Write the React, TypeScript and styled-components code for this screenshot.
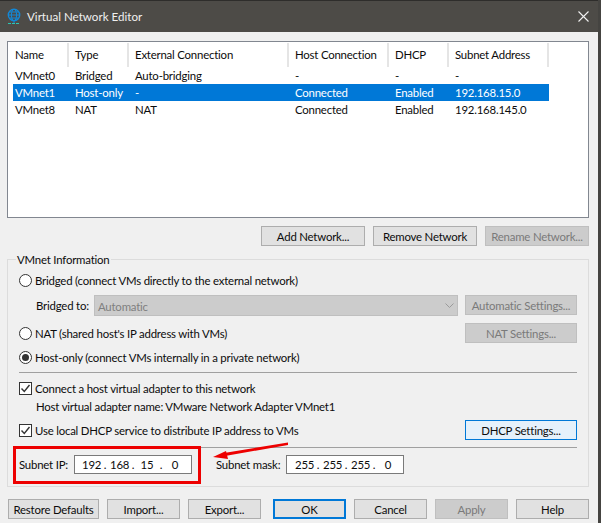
import { Fragment } from "react";
import styled, { createGlobalStyle } from "styled-components";

const Global = createGlobalStyle`
  html, body { margin: 0; padding: 0; background: #f0f0f0; }
  body { font-family: Lato, "Liberation Sans", sans-serif; font-size: 11.4px; letter-spacing: -0.2px; color: #0c0c0c; }
`;

const Window = styled.div`
  position: relative;
  width: 601px;
  height: 523px;
  box-sizing: border-box;
  border-right: 3px solid #454441;
  overflow: hidden;
  background: #f0f0f0;
`;

const TitleBar = styled.div`
  height: 32px;
  background: #4d4b47;
  border-top: 1px solid #2e2d2b;
  box-sizing: border-box;
  display: flex;
  align-items: center;
  padding: 0 9px 0 7px;
  gap: 6px;
  color: #f0f0f0;
  font-size: 11.6px;
  letter-spacing: 0;
`;

const TitleText = styled.span`
  flex: 1;
`;

const Body = styled.div`
  padding: 9px 9px 0 7px;
  display: flex;
  flex-direction: column;
`;

const ListBox = styled.div`
  height: 177px;
  box-sizing: border-box;
  background: #fff;
  border: 1px solid #828790;
  padding: 1px 1px;
`;

const HeaderRow = styled.div`
  display: grid;
  grid-template-columns: 60px 60px 160px 100px 60px 100px;
  height: 24px;
  align-items: center;
`;

const HeaderCell = styled.div`
  height: 24px;
  line-height: 24px;
  padding-left: 6px;
  border-right: 2px solid #e5e5e5;
  box-sizing: border-box;
  white-space: nowrap;
`;

const Row = styled.div<{ $selected?: boolean }>`
  display: grid;
  grid-template-columns: 56px 60px 160px 100px 60px 100px;
  width: 536px;
  margin-left: 4px;
  height: 17px;
  line-height: 18px;
  background: ${(p) => (p.$selected ? "#0078d7" : "transparent")};
  color: ${(p) => (p.$selected ? "#fff" : "#0c0c0c")};
`;

const Cell = styled.div`
  padding-left: 6px;
  white-space: nowrap;
  &:first-child {
    padding-left: 2px;
  }
`;

const ListActions = styled.div`
  display: flex;
  justify-content: flex-end;
  gap: 8px;
  margin-top: 8px;
`;

const Button = styled.div<{ $w?: number; $disabled?: boolean; $accent?: "hover" | "default" }>`
  width: ${(p) => p.$w ?? 73}px;
  height: 20px;
  box-sizing: border-box;
  display: flex;
  align-items: center;
  justify-content: center;
  white-space: nowrap;
  background: ${(p) => (p.$disabled ? "#cccccc" : p.$accent === "hover" ? "#e5f1fb" : "#e1e1e1")};
  color: ${(p) => (p.$disabled ? "#7a7a7a" : "#0c0c0c")};
  border: ${(p) => (p.$accent === "default" ? "2px solid #0078d7" : "1px solid")};
  border-color: ${(p) =>
    p.$accent ? "#0078d7" : p.$disabled ? "#bfbfbf" : "#adadad"};
`;

const Group = styled.div`
  position: relative;
  margin-top: 13px;
  height: 228px;
  box-sizing: border-box;
  border: 1px solid #dcdcdc;
  padding: 10px 11px 0 11px;
`;

const Legend = styled.span`
  position: absolute;
  top: -7px;
  left: 8px;
  padding: 0 1px;
  background: #f0f0f0;
`;

const OptionRow = styled.div<{ $h?: number; $mt?: number }>`
  display: flex;
  align-items: center;
  gap: 3px;
  height: ${(p) => p.$h ?? 20}px;
  margin-top: ${(p) => p.$mt ?? 0}px;
  white-space: nowrap;
`;

const Radio = styled.span<{ $checked?: boolean }>`
  width: 13px;
  height: 13px;
  box-sizing: border-box;
  border-radius: 50%;
  border: 1px solid #333;
  background: #fff;
  display: flex;
  align-items: center;
  justify-content: center;
  &::after {
    content: "";
    display: ${(p) => (p.$checked ? "block" : "none")};
    width: 7px;
    height: 7px;
    border-radius: 50%;
    background: #333;
  }
`;

const Check = styled.span`
  width: 13px;
  height: 13px;
  box-sizing: border-box;
  border: 1px solid #333;
  background: #fff;
  display: flex;
  align-items: center;
  justify-content: center;
`;

const BridgedRow = styled.div`
  display: flex;
  align-items: flex-start;
  margin-top: 5px;
  height: 28px;
`;

const FieldLabel = styled.span`
  width: 58px;
  margin-left: 17px;
  line-height: 21px;
  white-space: nowrap;
`;

const Select = styled.div`
  width: 364px;
  height: 21px;
  box-sizing: border-box;
  background: #cccccc;
  border: 1px solid #bfbfbf;
  color: #7f7f7f;
  display: flex;
  align-items: center;
  justify-content: space-between;
  padding: 1px 3px 0 3px;
  margin-right: 7px;
`;

const SplitRow = styled.div<{ $mt?: number }>`
  display: flex;
  align-items: center;
  justify-content: space-between;
  margin-top: ${(p) => p.$mt ?? 0}px;
`;

const Divider = styled.div<{ $mt?: number }>`
  height: 1px;
  background: #a0a0a0;
  margin-top: ${(p) => p.$mt ?? 0}px;
`;

const HintLine = styled.div`
  padding-left: 17px;
  height: 18px;
  line-height: 18px;
  white-space: nowrap;
`;

const SubnetRow = styled.div`
  display: flex;
  align-items: center;
  height: 19px;
  margin-top: 7px;
`;

const SubnetLabel = styled.span<{ $w: number; $ml?: number }>`
  width: ${(p) => p.$w}px;
  margin-left: ${(p) => p.$ml ?? 0}px;
  white-space: nowrap;
`;

const IpInput = styled.div<{ $pad: number }>`
  width: 118px;
  height: 19px;
  box-sizing: border-box;
  background: #fff;
  border: 1px solid #7a7a7a;
  display: flex;
  padding-left: ${(p) => p.$pad}px;
  align-items: center;
  text-align: center;
`;

const Octet = styled.span`
  width: 18px;
`;

const Dot = styled.span`
  width: 10px;
`;

const Footer = styled.div`
  display: flex;
  justify-content: space-between;
  margin: 12px 0 0 1px;
`;

const ButtonGroup = styled.div`
  display: flex;
  gap: 8px;
`;

const RedBox = styled.div`
  position: absolute;
  left: 13px;
  top: 446px;
  width: 188px;
  height: 38px;
  box-sizing: border-box;
  border: 3px solid #ed0000;
`;

const Arrow = styled.svg`
  position: absolute;
  left: 205px;
  top: 438px;
`;

const Globe = () => (
  <svg width="14" height="17" viewBox="0 0 14 17" fill="none" stroke="#1288d8" strokeWidth="1">
    <circle cx="7" cy="7" r="5.7" strokeWidth="1.4" />
    <ellipse cx="7" cy="7" rx="2.6" ry="5.7" />
    <path d="M1.5 7h11M2.5 4h9M2.5 10h9M7 12.5v2.5" />
    <path d="M1 15.5h12" stroke="#2bc7b4" strokeDasharray="3 1" />
  </svg>
);

const CloseIcon = () => (
  <svg width="11" height="11" viewBox="0 0 11 11" stroke="#f2f2f2" strokeWidth="1.1">
    <path d="M0.5 0.5l10 10M10.5 0.5l-10 10" />
  </svg>
);

const Tick = () => (
  <svg width="11" height="11" viewBox="0 0 11 11" fill="none" stroke="#333" strokeWidth="1.4">
    <path d="M1.5 5.5l2.8 3 5.2-6.5" />
  </svg>
);

const Chevron = () => (
  <svg width="9" height="6" viewBox="0 0 9 6" fill="none" stroke="#9a9a9a">
    <path d="M0.5 0.5l4 4 4-4" />
  </svg>
);

const columns = ["Name", "Type", "External Connection", "Host Connection", "DHCP", "Subnet Address"];

const rows = [
  ["VMnet0", "Bridged", "Auto-bridging", "-", "-", "-"],
  ["VMnet1", "Host-only", "-", "Connected", "Enabled", "192.168.15.0"],
  ["VMnet8", "NAT", "NAT", "Connected", "Enabled", "192.168.145.0"],
];

const Ip = ({ parts, pad }: { parts: string[]; pad: number }) => (
  <IpInput $pad={pad}>
    {parts.map((part, i) => (
      <Fragment key={i}>
        <Octet>{part}</Octet>
        {i < 3 && <Dot>.</Dot>}
      </Fragment>
    ))}
  </IpInput>
);

const App = () => (
  <Window>
    <Global />
    <TitleBar>
      <Globe />
      <TitleText>Virtual Network Editor</TitleText>
      <CloseIcon />
    </TitleBar>
    <Body>
      <ListBox>
        <HeaderRow>
          {columns.map((c) => (
            <HeaderCell key={c}>{c}</HeaderCell>
          ))}
        </HeaderRow>
        {rows.map((r, i) => (
          <Row key={r[0]} $selected={i === 1}>
            {r.map((c, j) => (
              <Cell key={j}>{c}</Cell>
            ))}
          </Row>
        ))}
      </ListBox>
      <ListActions>
        <Button $w={104}>Add Network...</Button>
        <Button $w={104}>Remove Network</Button>
        <Button $w={104} $disabled>
          Rename Network...
        </Button>
      </ListActions>
      <Group>
        <Legend>VMnet Information</Legend>
        <OptionRow>
          <Radio />
          Bridged (connect VMs directly to the external network)
        </OptionRow>
        <BridgedRow>
          <FieldLabel>Bridged to:</FieldLabel>
          <Select>
            Automatic
            <Chevron />
          </Select>
          <Button $w={112} $disabled>
            Automatic Settings...
          </Button>
        </BridgedRow>
        <SplitRow>
          <OptionRow>
            <Radio />
            NAT (shared host's IP address with VMs)
          </OptionRow>
          <Button $w={112} $disabled>
            NAT Settings...
          </Button>
        </SplitRow>
        <OptionRow $h={29}>
          <Radio $checked />
          Host-only (connect VMs internally in a private network)
        </OptionRow>
        <Divider />
        <OptionRow $mt={5}>
          <Check>
            <Tick />
          </Check>
          Connect a host virtual adapter to this network
        </OptionRow>
        <HintLine>Host virtual adapter name: VMware Network Adapter VMnet1</HintLine>
        <SplitRow $mt={4}>
          <OptionRow>
            <Check>
              <Tick />
            </Check>
            Use local DHCP service to distribute IP address to VMs
          </OptionRow>
          <Button $w={112} $accent="hover">
            DHCP Settings...
          </Button>
        </SplitRow>
        <Divider $mt={7} />
        <SubnetRow>
          <SubnetLabel $w={55}>Subnet IP:</SubnetLabel>
          <Ip parts={["192", "168", "15", "0"]} pad={7} />
          <SubnetLabel $w={70} $ml={24}>
            Subnet mask:
          </SubnetLabel>
          <Ip parts={["255", "255", "255", "0"]} pad={8} />
        </SubnetRow>
      </Group>
      <Footer>
        <ButtonGroup>
          <Button $w={91}>Restore Defaults</Button>
          <Button>Import...</Button>
          <Button>Export...</Button>
        </ButtonGroup>
        <ButtonGroup>
          <Button $accent="default">OK</Button>
          <Button>Cancel</Button>
          <Button $disabled>Apply</Button>
          <Button>Help</Button>
        </ButtonGroup>
      </Footer>
    </Body>
    <RedBox />
    <Arrow width="85" height="22" viewBox="0 0 85 22">
      <path d="M83 4.5L83 7L20 18L19 15Z" fill="#ed0000" />
      <path d="M8 19L21 13L23 21Z" fill="#ed0000" />
    </Arrow>
  </Window>
);

export default App;
